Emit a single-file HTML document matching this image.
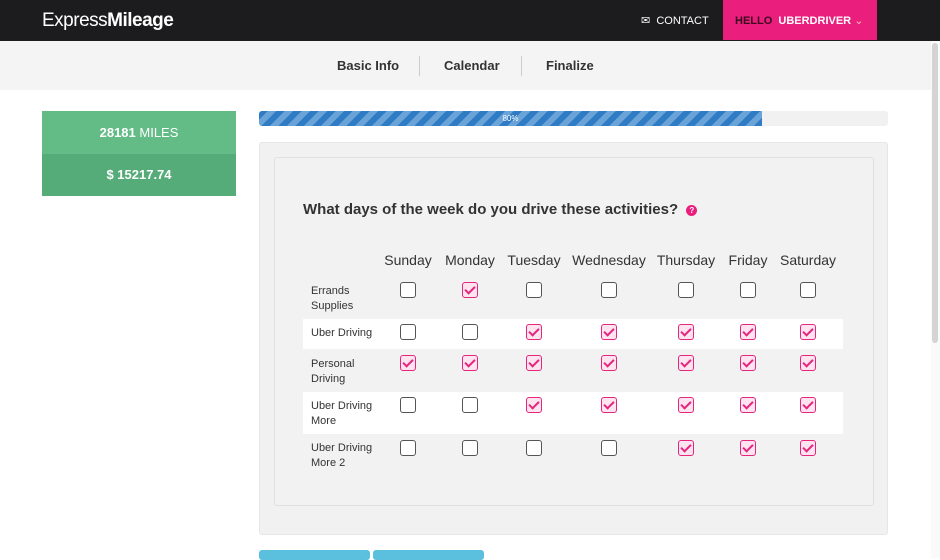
<!DOCTYPE html>
<html><head><meta charset="utf-8"><style>
*{box-sizing:border-box;margin:0;padding:0}
body{width:940px;height:558px;overflow:hidden;background:#fff;font-family:"Liberation Sans",sans-serif;position:relative;color:#333}
.a{position:absolute}
.cb{position:absolute;width:16px;height:16px;border:1.5px solid #555;border-radius:3px;background:#fff}
.cb.on{border-color:#e5267f;background:#fde4ef}
.cb.on::after{content:"";position:absolute;left:4px;top:1px;width:4px;height:8px;border:solid #e5267f;border-width:0 2.5px 2.5px 0;transform:rotate(45deg)}
.lab{position:absolute;left:311px;font-size:11px;line-height:15px;color:#333}
.day{position:absolute;top:252px;font-size:14px;color:#333;transform:translateX(-50%)}
</style></head><body>
<div class="a" style="left:0;top:0;width:940px;height:41px;background:#1c1c1e"></div>
<div class="a" style="left:42px;top:10px;font-size:19px;color:#fff;letter-spacing:-0.5px">Express<b>Mileage</b></div>
<div class="a" style="left:641px;top:14px;font-size:11px;color:#fff">✉&nbsp; CONTACT</div>
<div class="a" style="left:723px;top:0;width:154px;height:40px;background:#e91e7d"></div>
<div class="a" style="left:735px;top:14px;font-size:11px;font-weight:bold;color:#3a0a1e">HELLO &nbsp;<span style="color:#fff">UBERDRIVER</span> <span style="color:#fbb;font-weight:normal">⌄</span></div>
<div class="a" style="left:0;top:41px;width:940px;height:49px;background:#f4f4f4"></div>
<div class="a" style="left:337px;top:58px;font-size:13px;font-weight:bold;color:#333">Basic Info</div>
<div class="a" style="left:419px;top:56px;width:1px;height:20px;background:#ccc"></div>
<div class="a" style="left:444px;top:58px;font-size:13px;font-weight:bold;color:#333">Calendar</div>
<div class="a" style="left:521px;top:56px;width:1px;height:20px;background:#ccc"></div>
<div class="a" style="left:546px;top:58px;font-size:13px;font-weight:bold;color:#333">Finalize</div>
<div class="a" style="left:931px;top:41px;width:9px;height:517px;background:#fafafa"></div>
<div class="a" style="left:932px;top:43px;width:6px;height:300px;background:#d4d4d4;border-radius:3px"></div>
<div class="a" style="left:42px;top:111px;width:194px;height:43px;background:#63bb86;color:#fff;font-size:13px;text-align:center;line-height:43px"><b>28181</b> MILES</div>
<div class="a" style="left:42px;top:154px;width:194px;height:42px;background:#56ac78;color:#fff;font-size:13px;font-weight:bold;text-align:center;line-height:42px">$ 15217.74</div>
<div class="a" style="left:259px;top:111px;width:629px;height:15px;background:#f1f1f1;border-radius:3px"></div>
<div class="a" style="left:259px;top:111px;width:503px;height:15px;border-radius:3px 0 0 3px;background:repeating-linear-gradient(-45deg,#2f7cc4 0 6px,#6aa3d8 6px 12px);color:#fff;font-size:8px;text-align:center;line-height:15px">80%</div>
<div class="a" style="left:259px;top:142px;width:629px;height:393px;background:#f1f1f1;border:1px solid #e6e6e6;border-radius:3px"></div>
<div class="a" style="left:274px;top:157px;width:600px;height:349px;background:#f2f2f2;border:1px solid #e0e0e0;border-radius:3px"></div>
<div class="a" style="left:303px;top:201px;font-size:15px;font-weight:bold;color:#333">What days of the week do you drive these activities? <span style="display:inline-block;width:11px;height:11px;border-radius:50%;background:#e91e7d;color:#fff;font-size:8px;text-align:center;line-height:11px;vertical-align:1px;margin-left:4px">?</span></div>
<div class="a" style="left:303px;top:319px;width:540px;height:30px;background:#fff"></div>
<div class="a" style="left:303px;top:392px;width:540px;height:42px;background:#fff"></div>
<div class="day" style="left:408px">Sunday</div><div class="day" style="left:470px">Monday</div><div class="day" style="left:534px">Tuesday</div><div class="day" style="left:609px">Wednesday</div><div class="day" style="left:686px">Thursday</div><div class="day" style="left:748px">Friday</div><div class="day" style="left:808px">Saturday</div>
<div class="lab" style="top:284px">Errands<br>Supplies</div>
<div class="lab" style="top:326px">Uber Driving</div>
<div class="lab" style="top:357px">Personal<br>Driving</div>
<div class="lab" style="top:399px">Uber Driving<br>More</div>
<div class="lab" style="top:441px">Uber Driving<br>More 2</div>
<div id="g"></div>
<script>
var xs=[408,470,534,609,686,748,808],ys=[290,332,363,405,448];
var m=["0100000","0011111","1111111","0011111","0000111"],h="";
for(var r=0;r<5;r++)for(var c=0;c<7;c++)h+='<div class="cb'+(m[r][c]=="1"?" on":"")+'" style="left:'+(xs[c]-8)+'px;top:'+(ys[r]-8)+'px"></div>';
document.getElementById("g").innerHTML=h;
</script>
<div class="a" style="left:259px;top:550px;width:111px;height:10px;background:#5bc0de;border-radius:3px"></div>
<div class="a" style="left:373px;top:550px;width:111px;height:10px;background:#5bc0de;border-radius:3px"></div>
</body></html>
